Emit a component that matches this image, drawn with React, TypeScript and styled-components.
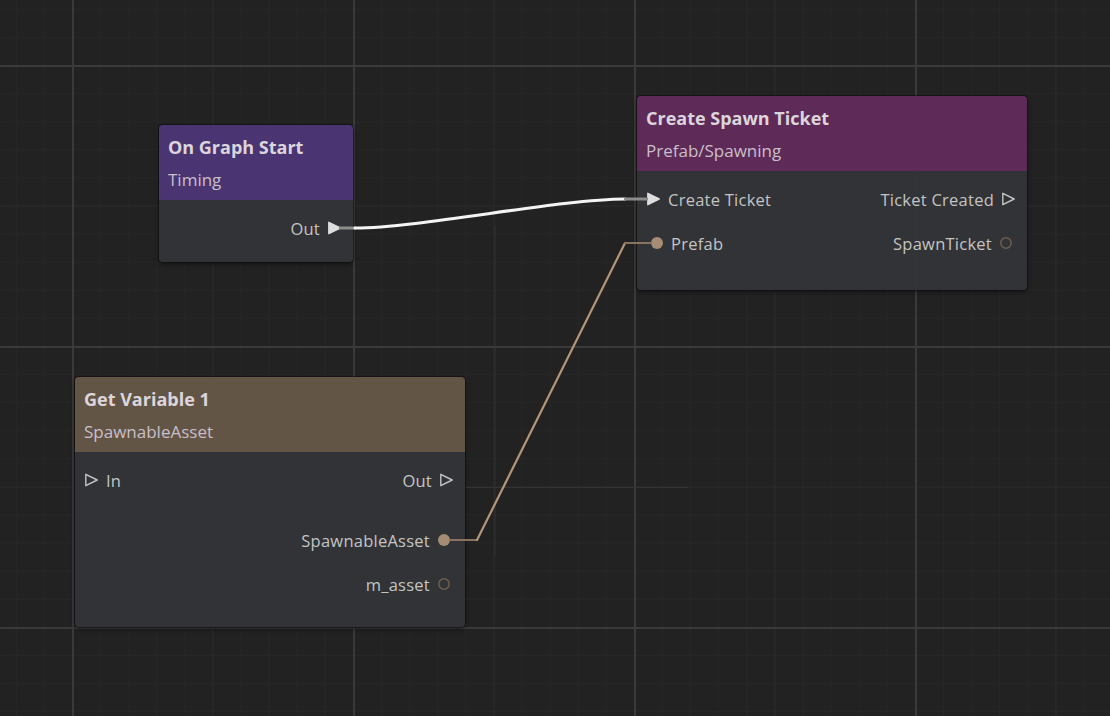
import styled, { createGlobalStyle } from 'styled-components'

const GlobalStyle = createGlobalStyle`
  html, body {
    margin: 0;
    padding: 0;
    background: #222222;
  }
  body {
    font-family: "Open Sans", "Noto Sans", "DejaVu Sans", sans-serif;
  }
`

const Canvas = styled.div`
  position: relative;
  width: 1110px;
  height: 716px;
  overflow: hidden;
  background-color: #222222;
  background-image:
    linear-gradient(to right, #3a3a3a 2px, transparent 2px),
    linear-gradient(to bottom, #3a3a3a 2px, transparent 2px),
    linear-gradient(to right, #2a2a2a 1px, transparent 1px),
    linear-gradient(to bottom, #2a2a2a 1px, transparent 1px),
    linear-gradient(to right, #262626 1px, transparent 1px),
    linear-gradient(to bottom, #262626 1px, transparent 1px);
  background-size:
    281px 100%,
    100% 281px,
    140.5px 100%,
    100% 140.5px,
    28.1px 100%,
    100% 28.1px;
  background-position:
    72px 0,
    0 65px,
    72px 0,
    0 65px,
    72px 0,
    0 65px;
`

const Node = styled.div<{ $x: number; $y: number; $w: number; $h: number }>`
  position: absolute;
  left: ${p => p.$x}px;
  top: ${p => p.$y}px;
  width: ${p => p.$w}px;
  height: ${p => p.$h}px;
  display: flex;
  flex-direction: column;
  border-radius: 4px;
  overflow: hidden;
  box-shadow: 0 0 0 1px rgba(0, 0, 0, 0.35), 0 2px 5px rgba(0, 0, 0, 0.45);
`

const Header = styled.div<{ $color: string }>`
  height: 75px;
  box-sizing: border-box;
  padding: 11px 9px 0;
  display: flex;
  flex-direction: column;
  background: ${p => p.$color};
`

const Title = styled.div`
  font-size: 18px;
  font-weight: 700;
  line-height: 22px;
  color: #dcd5dc;
  white-space: nowrap;
`

const Subtitle = styled.div`
  margin-top: 11px;
  font-size: 17px;
  line-height: 22px;
  color: #c9bfc9;
  white-space: nowrap;
`

const Body = styled.div`
  flex: 1;
  padding-top: 6px;
  background: rgba(51, 52, 55, 0.96);
`

const Row = styled.div<{ $gap?: number }>`
  height: 44px;
  margin-top: ${p => p.$gap || 0}px;
  padding: 0 12px 0 10px;
  display: flex;
  align-items: center;
  justify-content: space-between;
`

const Port = styled.div`
  display: flex;
  align-items: center;
  gap: 8px;
  font-size: 16.5px;
  letter-spacing: 0.25px;
  color: #c4c4c4;
  white-space: nowrap;
`

const Wires = styled.svg`
  position: absolute;
  left: 0;
  top: 0;
  pointer-events: none;
`

const PinIcon = styled.svg<{ $inset?: string }>`
  flex: none;
  margin: ${p => p.$inset || '0'};
`

type Side = 'in' | 'out'

function ExecPin({ filled }: { filled?: boolean }) {
  return (
    <PinIcon width="13" height="14" viewBox="0 0 13 14">
      <polygon
        points="0.8,1.3 12.2,7 0.8,12.7"
        fill={filled ? '#dedede' : 'none'}
        stroke={filled ? '#dedede' : '#c4c4c4'}
        strokeWidth="1.4"
        strokeLinejoin="round"
      />
    </PinIcon>
  )
}

function DataPin({ filled, side }: { filled?: boolean; side: Side }) {
  return (
    <PinIcon width="12" height="12" viewBox="0 0 12 12" $inset={side === 'in' ? '0 0 0 4px' : '0 3px 0 0'}>
      {filled
        ? <circle cx="6" cy="6" r="6" fill="#a58d75" />
        : <circle cx="6" cy="6" r="5.2" fill="none" stroke="#6f5e4d" strokeWidth="1.5" />}
    </PinIcon>
  )
}

export default function App() {
  return (
    <>
      <GlobalStyle />
      <Canvas>
        <Node $x={159} $y={125} $w={194} $h={137}>
          <Header $color="#4a3572">
            <Title>On Graph Start</Title>
            <Subtitle>Timing</Subtitle>
          </Header>
          <Body>
            <Row>
              <span />
              <Port>Out <ExecPin filled /></Port>
            </Row>
          </Body>
        </Node>

        <Node $x={637} $y={96} $w={390} $h={194}>
          <Header $color="#5e2b58">
            <Title>Create Spawn Ticket</Title>
            <Subtitle>Prefab/Spawning</Subtitle>
          </Header>
          <Body>
            <Row>
              <Port><ExecPin filled /> Create Ticket</Port>
              <Port>Ticket Created <ExecPin /></Port>
            </Row>
            <Row>
              <Port><DataPin filled side="in" /> Prefab</Port>
              <Port>SpawnTicket <DataPin side="out" /></Port>
            </Row>
          </Body>
        </Node>

        <Node $x={75} $y={377} $w={390} $h={250}>
          <Header $color="#635546">
            <Title>Get Variable 1</Title>
            <Subtitle>SpawnableAsset</Subtitle>
          </Header>
          <Body>
            <Row>
              <Port><ExecPin /> In</Port>
              <Port>Out <ExecPin /></Port>
            </Row>
            <Row $gap={16}>
              <span />
              <Port>SpawnableAsset <DataPin filled side="out" /></Port>
            </Row>
            <Row>
              <span />
              <Port>m_asset <DataPin side="out" /></Port>
            </Row>
          </Body>
        </Node>

        <Wires width="1110" height="716">
          <line x1="495" y1="225" x2="495" y2="556" stroke="#333333" strokeWidth="1" />
          <line x1="466" y1="487.5" x2="688" y2="487.5" stroke="#333333" strokeWidth="1" />

          <line x1="339" y1="228" x2="356" y2="228" stroke="#8c8c8c" strokeWidth="3" />
          <path d="M355 228 C 420 228, 560 199, 625 199" fill="none" stroke="#f4f4f4" strokeWidth="3.2" strokeLinecap="round" />
          <line x1="624" y1="199" x2="648" y2="199" stroke="#8c8c8c" strokeWidth="3" />

          <line x1="449" y1="540" x2="478" y2="540" stroke="#8a735e" strokeWidth="2" />
          <path d="M477 540 L 625 243" fill="none" stroke="#b39678" strokeWidth="2.2" strokeLinecap="round" />
          <line x1="624" y1="243" x2="652" y2="243" stroke="#8a735e" strokeWidth="2" />
        </Wires>
      </Canvas>
    </>
  )
}
